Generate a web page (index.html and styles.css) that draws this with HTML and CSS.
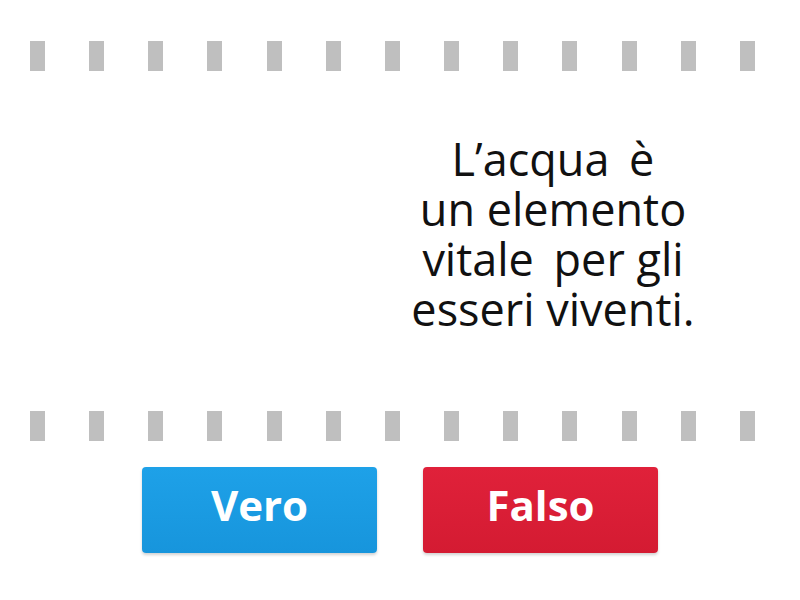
FILE: index.html
```html
<!DOCTYPE html>
<html lang="it">
<head>
<meta charset="utf-8">
<title>Vero o falso</title>
<link rel="stylesheet" href="styles.css">
</head>
<body>
<main class="quiz">
  <div class="track">
    <span class="tick"></span><span class="tick"></span><span class="tick"></span><span class="tick"></span><span class="tick"></span><span class="tick"></span><span class="tick"></span><span class="tick"></span><span class="tick"></span><span class="tick"></span><span class="tick"></span><span class="tick"></span><span class="tick"></span>
  </div>
  <section class="card">
    <div class="card-media"></div>
    <p class="statement">
      <span class="line"><span class="w wide">L’acqua</span> è</span>
      <span class="line">un elemento</span>
      <span class="line"><span class="w wide">vitale</span> per gli</span>
      <span class="line">esseri viventi.</span>
    </p>
  </section>
  <div class="track">
    <span class="tick"></span><span class="tick"></span><span class="tick"></span><span class="tick"></span><span class="tick"></span><span class="tick"></span><span class="tick"></span><span class="tick"></span><span class="tick"></span><span class="tick"></span><span class="tick"></span><span class="tick"></span><span class="tick"></span>
  </div>
  <div class="answers">
    <button class="answer answer-true" type="button">Vero</button>
    <button class="answer answer-false" type="button">Falso</button>
  </div>
</main>
</body>
</html>
```

FILE: styles.css
```css
html, body {
  margin: 0;
  padding: 0;
  background: #ffffff;
}

body {
  width: 800px;
  height: 600px;
  overflow: hidden;
  font-family: "Open Sans", "Noto Sans", sans-serif;
  color: #111111;
}

.quiz {
  display: flex;
  flex-direction: column;
  padding-top: 41px;
}

/* dashed film-strip rows */
.track {
  display: flex;
  justify-content: space-between;
  padding: 0 45px 0 30px;
  height: 30px;
}

.tick {
  display: block;
  width: 15px;
  height: 30px;
  background: #bfbfbf;
}

.card {
  display: flex;
  height: 340px;
}

.card-media {
  width: 400px;
}

.statement {
  width: 306px;
  margin: 0;
  padding-top: 63px;
  font-size: 45px;
  line-height: 50px;
  text-align: center;
}

.line {
  display: block;
  height: 50px;
  white-space: nowrap;
}

.w.wide {
  margin-right: 8px;
}

.answers {
  display: flex;
  justify-content: center;
  gap: 46px;
  padding-top: 26px;
}

.answer {
  width: 235px;
  height: 86px;
  border: none;
  border-radius: 4px;
  font-family: "Open Sans", "Noto Sans", sans-serif;
  font-weight: 700;
  font-size: 42px;
  color: #ffffff;
  padding: 0 0 12px 0;
  box-shadow: 0 2px 3px rgba(0, 0, 0, 0.18);
}

.answer-true {
  background: linear-gradient(#1ea1e8, #1795dc);
}

.answer-false {
  background: linear-gradient(#e0213a, #d41b32);
}
```
